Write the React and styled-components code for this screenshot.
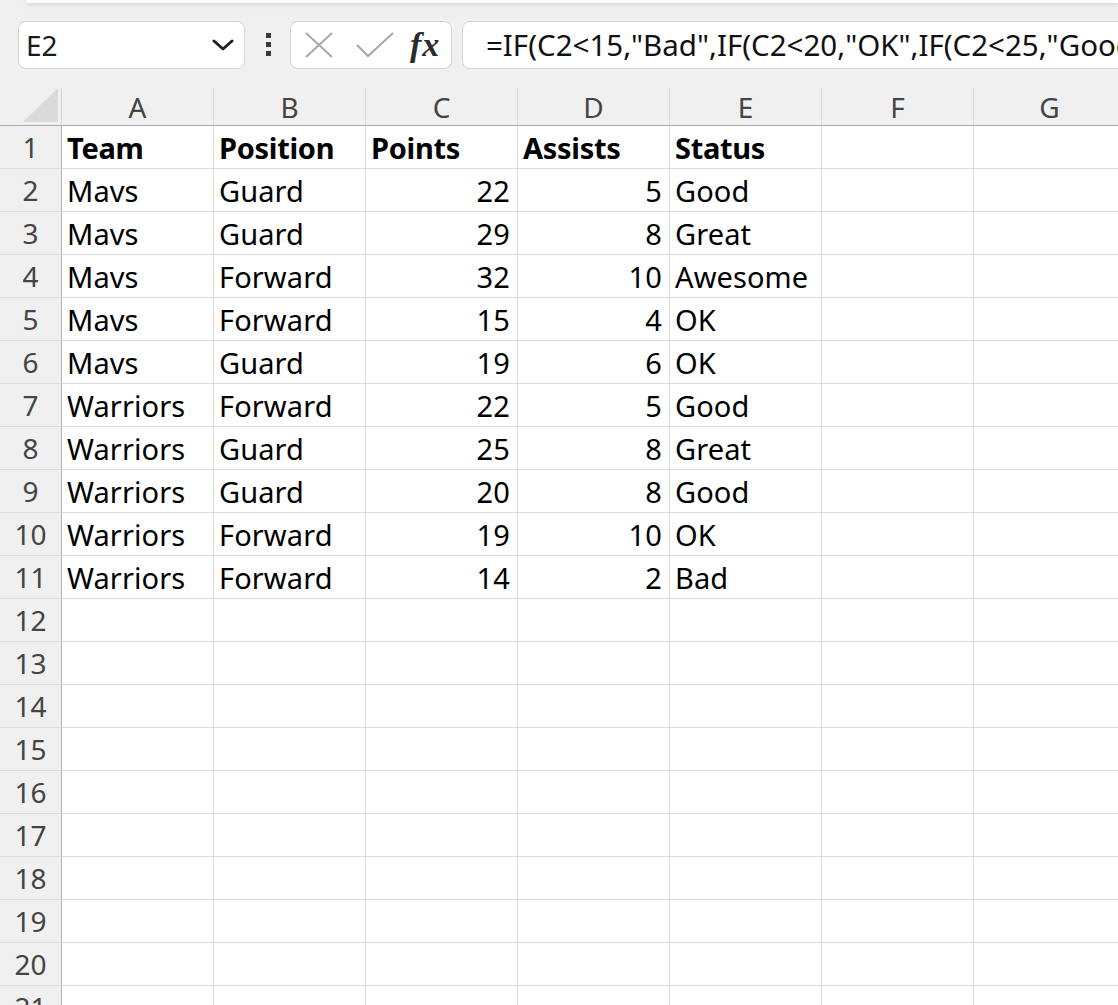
import React from "react";
import styled, { createGlobalStyle } from "styled-components";

const GlobalStyle = createGlobalStyle`
  html, body {
    margin: 0;
    padding: 0;
    background: #f0f0f0;
    overflow: hidden;
  }
  * { box-sizing: border-box; }
`;

const COLS = ["A", "B", "C", "D", "E", "F", "G"];
const ROW_COUNT = 21;

const data = [
  ["Team", "Position", "Points", "Assists", "Status"],
  ["Mavs", "Guard", 22, 5, "Good"],
  ["Mavs", "Guard", 29, 8, "Great"],
  ["Mavs", "Forward", 32, 10, "Awesome"],
  ["Mavs", "Forward", 15, 4, "OK"],
  ["Mavs", "Guard", 19, 6, "OK"],
  ["Warriors", "Forward", 22, 5, "Good"],
  ["Warriors", "Guard", 25, 8, "Great"],
  ["Warriors", "Guard", 20, 8, "Good"],
  ["Warriors", "Forward", 19, 10, "OK"],
  ["Warriors", "Forward", 14, 2, "Bad"],
];

const FORMULA = '=IF(C2<15,"Bad",IF(C2<20,"OK",IF(C2<25,"Good",IF(C2<30,"Great","Awesome"))))';

const Page = styled.div`
  width: 1118px;
  height: 1005px;
  overflow: hidden;
  background: #f0f0f0;
  font-family: "Noto Sans", "Open Sans", sans-serif;
`;

const Ribbon = styled.div`
  height: 3px;
  margin-left: 26px;
  background: #ffffff;
  border-bottom-left-radius: 8px;
  box-shadow: 0 1px 5px rgba(0, 0, 0, 0.18);
`;

const FormulaBar = styled.div`
  display: flex;
  align-items: center;
  height: 85px;
  padding: 16px 0 18px 18px;
`;

const Box = styled.div`
  display: flex;
  align-items: center;
  height: 48px;
  background: #ffffff;
  border: 1px solid #d5d5d5;
  border-radius: 8px;
  flex: ${(p) => (p.$grow ? "1 0 auto" : "0 0 auto")};
  width: ${(p) => (p.$w ? `${p.$w}px` : "auto")};
  overflow: hidden;
`;

const FormulaBox = styled(Box)`
  margin-left: 10px;
  margin-right: -20px;
  border-top-right-radius: 0;
  border-bottom-right-radius: 0;
`;

const NameText = styled.span`
  flex: 1;
  padding-left: 7px;
  font-size: 28px;
  color: #1a1a1a;
`;

const Chevron = styled.svg`
  width: 22px;
  height: 12px;
  margin-right: 10px;
`;

const Dots = styled.div`
  display: flex;
  flex-direction: column;
  gap: 4px;
  margin: 0 19px 0 21px;

  span {
    width: 5px;
    height: 5px;
    background: #3a3a3a;
  }
`;

const IconBtn = styled.svg`
  flex: 0 0 auto;
  margin-left: ${(p) => p.$ml}px;
`;

const Fx = styled.span`
  font-family: "Liberation Serif", "DejaVu Serif", serif;
  font-style: italic;
  font-weight: bold;
  font-size: 34px;
  color: #2b2b2b;
  margin-left: 16px;
  letter-spacing: 1px;
`;

const FormulaText = styled.span`
  padding-left: 23px;
  font-size: 29.5px;
  color: #111;
  white-space: nowrap;
`;

const Sheet = styled.div`
  display: grid;
  grid-template-columns: 62px repeat(7, 152px);
  grid-auto-rows: 43px;
  grid-template-rows: 38px;
`;

const Corner = styled.div`
  position: relative;
  border-right: 1px solid #d6d6d6;
  border-bottom: 1px solid #a8a8a8;
  background: #f0f0f0;

  &::after {
    content: "";
    position: absolute;
    right: 3px;
    bottom: 3px;
    width: 0;
    height: 0;
    border-style: solid;
    border-width: 0 0 34px 35px;
    border-color: transparent transparent #dadada transparent;
  }
`;

const ColHead = styled.div`
  display: flex;
  align-items: center;
  justify-content: center;
  background: #f0f0f0;
  border-right: 1px solid #d9d9d9;
  border-bottom: 1px solid #a8a8a8;
  font-size: 28px;
  color: #444;
`;

const RowHead = styled.div`
  display: flex;
  align-items: center;
  justify-content: center;
  background: #f0f0f0;
  border-right: 1px solid #b4b4b4;
  border-bottom: 1px solid #dcdcdc;
  font-size: 28px;
  color: #444;
`;

const Cell = styled.div`
  display: flex;
  align-items: center;
  justify-content: ${(p) => (p.$num ? "flex-end" : "flex-start")};
  padding: ${(p) => (p.$num ? "0 7px 0 0" : "0 0 0 5px")};
  background: #ffffff;
  border-right: 1px solid #dadada;
  border-bottom: 1px solid #dadada;
  font-size: 29px;
  font-weight: ${(p) => (p.$bold ? 700 : 400)};
  letter-spacing: ${(p) => (p.$bold ? "-0.3px" : "0.1px")};
  color: #000;
  white-space: nowrap;
`;

export default function App() {
  const rows = [];
  for (let r = 0; r < ROW_COUNT; r++) {
    const values = data[r] || [];
    rows.push(<RowHead key={"h" + r}>{r + 1}</RowHead>);
    COLS.forEach((c, i) => {
      const v = values[i];
      rows.push(
        <Cell key={c + r} $num={typeof v === "number"} $bold={r === 0}>
          {v}
        </Cell>
      );
    });
  }

  return (
    <Page>
      <GlobalStyle />
      <Ribbon />
      <FormulaBar>
        <Box $w={227}>
          <NameText>E2</NameText>
          <Chevron viewBox="0 0 22 12">
            <path d="M2 2 L11 10 L20 2" fill="none" stroke="#222" strokeWidth="3" strokeLinecap="round" strokeLinejoin="round" />
          </Chevron>
        </Box>
        <Dots>
          <span />
          <span />
          <span />
        </Dots>
        <Box $w={162}>
          <IconBtn $ml={13} width="30" height="28" viewBox="0 0 30 28">
            <path d="M2 2 L28 26 M28 2 L2 26" stroke="#a8a8a8" strokeWidth="2" fill="none" />
          </IconBtn>
          <IconBtn $ml={22} width="38" height="26" viewBox="0 0 38 26">
            <path d="M1 13 L12 24 L37 1" stroke="#a8a8a8" strokeWidth="2" fill="none" />
          </IconBtn>
          <Fx>fx</Fx>
        </Box>
        <FormulaBox $grow>
          <FormulaText>{FORMULA}</FormulaText>
        </FormulaBox>
      </FormulaBar>
      <Sheet>
        <Corner />
        {COLS.map((c) => (
          <ColHead key={c}>{c}</ColHead>
        ))}
        {rows}
      </Sheet>
    </Page>
  );
}
